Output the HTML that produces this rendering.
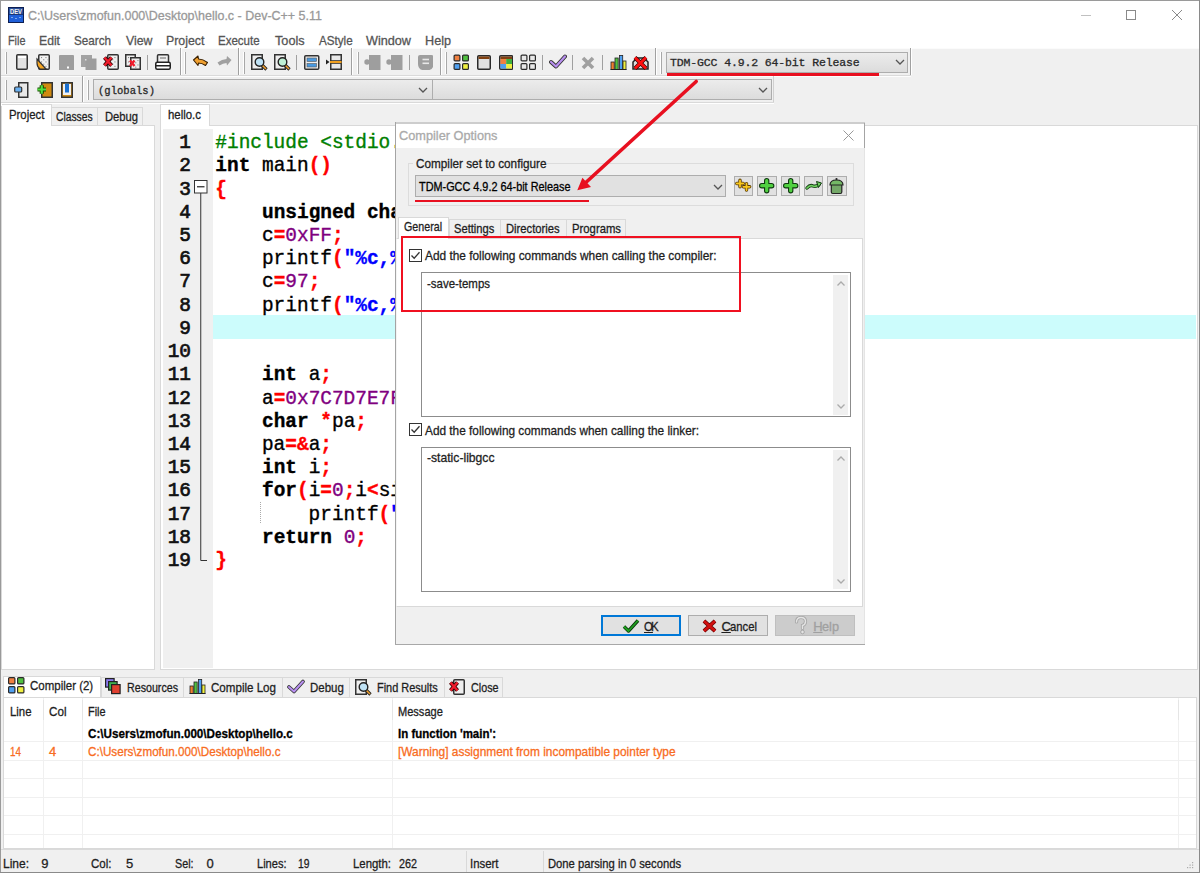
<!DOCTYPE html><html><head><meta charset="utf-8"><style>
html,body{margin:0;padding:0;width:1200px;height:873px;overflow:hidden;background:#f0f0f0;}
body>div,body>svg{position:absolute;white-space:nowrap;}
body>div>div{white-space:pre;}
b{font-weight:bold}
</style></head><body>
<div style="left:0px;top:0px;width:1200px;height:873px;background:#f0f0f0;"></div>
<div style="left:0px;top:0px;width:1200px;height:1px;background:#9a9a9a;"></div>
<div style="left:0px;top:0px;width:1px;height:873px;background:#9a9a9a;"></div>
<div style="left:1199px;top:0px;width:1px;height:873px;background:#8a8a8a;"></div>
<div style="left:0px;top:872px;width:1200px;height:1px;background:#8a8a8a;"></div>
<div style="left:1px;top:1px;width:1198px;height:29px;background:#fff;"></div>
<svg style="left:8px;top:7px" width="16" height="16" viewBox="0 0 16 16"><rect x="0" y="0" width="16" height="16" fill="#0d1f52"/><rect x="1" y="1" width="14" height="6.5" fill="#2a4f9a"/><text x="8" y="6.8" font-family="Liberation Sans" font-weight="bold" font-size="6.5" text-anchor="middle" fill="#f4f4f4" textLength="12" lengthAdjust="spacingAndGlyphs">DEV</text><rect x="1" y="8" width="14" height="7" fill="#1f5fd8"/><rect x="3" y="10" width="2" height="1" fill="#7aa8f0"/><rect x="7" y="11" width="2" height="1" fill="#7aa8f0"/><rect x="11" y="10" width="2" height="1" fill="#7aa8f0"/></svg>
<div style="left:27.5px;top:9.40px;font:normal 13px/13px 'Liberation Sans', sans-serif;color:#999;-webkit-text-stroke:0.3px #999;transform:scaleX(0.9604);transform-origin:0 0;">C:\Users\zmofun.000\Desktop\hello.c - Dev-C++ 5.11</div>
<div style="left:1081px;top:14.5px;width:10px;height:1.5px;background:#c0c0c0;"></div>
<div style="left:1126px;top:10px;width:10px;height:10px;border:1px solid #8a8a8a;box-sizing:border-box;"></div>
<svg style="left:1171px;top:9px" width="12" height="12"><path d="M1 1L11 11M11 1L1 11" stroke="#8a8a8a" stroke-width="1"/></svg>
<div style="left:1px;top:30px;width:1198px;height:18px;background:#fff;"></div>
<div style="left:7.6px;top:33.90px;font:normal 13px/13px 'Liberation Sans', sans-serif;color:#555;-webkit-text-stroke:0.3px #555;transform:scaleX(0.8306);transform-origin:0 0;">File</div>
<div style="left:39.4px;top:33.90px;font:normal 13px/13px 'Liberation Sans', sans-serif;color:#555;-webkit-text-stroke:0.3px #555;transform:scaleX(0.9374);transform-origin:0 0;">Edit</div>
<div style="left:74.4px;top:33.90px;font:normal 13px/13px 'Liberation Sans', sans-serif;color:#555;-webkit-text-stroke:0.3px #555;transform:scaleX(0.8982);transform-origin:0 0;">Search</div>
<div style="left:125.6px;top:33.90px;font:normal 13px/13px 'Liberation Sans', sans-serif;color:#555;-webkit-text-stroke:0.3px #555;transform:scaleX(0.9447);transform-origin:0 0;">View</div>
<div style="left:165.6px;top:33.90px;font:normal 13px/13px 'Liberation Sans', sans-serif;color:#555;-webkit-text-stroke:0.3px #555;transform:scaleX(0.9491);transform-origin:0 0;">Project</div>
<div style="left:218px;top:33.90px;font:normal 13px/13px 'Liberation Sans', sans-serif;color:#555;-webkit-text-stroke:0.3px #555;transform:scaleX(0.8856);transform-origin:0 0;">Execute</div>
<div style="left:274.8px;top:33.90px;font:normal 13px/13px 'Liberation Sans', sans-serif;color:#555;-webkit-text-stroke:0.3px #555;transform:scaleX(0.9753);transform-origin:0 0;">Tools</div>
<div style="left:318.7px;top:33.90px;font:normal 13px/13px 'Liberation Sans', sans-serif;color:#555;-webkit-text-stroke:0.3px #555;transform:scaleX(0.8943);transform-origin:0 0;">AStyle</div>
<div style="left:366px;top:33.90px;font:normal 13px/13px 'Liberation Sans', sans-serif;color:#555;-webkit-text-stroke:0.3px #555;transform:scaleX(0.9732);transform-origin:0 0;">Window</div>
<div style="left:425px;top:33.90px;font:normal 13px/13px 'Liberation Sans', sans-serif;color:#555;-webkit-text-stroke:0.3px #555;transform:scaleX(0.9724);transform-origin:0 0;">Help</div>
<div style="left:1px;top:48px;width:1198px;height:55px;background:#f0f0f0;"></div>
<div style="left:1px;top:47.5px;width:1198px;height:1px;background:#fbfbfb;"></div>
<div style="left:1px;top:75px;width:910px;height:1px;background:#dadada;"></div>
<div style="left:1px;top:76px;width:910px;height:1px;background:#fdfdfd;"></div>
<div style="left:1px;top:102px;width:773px;height:1px;background:#d9d9d9;"></div>
<div style="left:1px;top:103px;width:773px;height:1px;background:#fff;"></div>
<div style="left:5px;top:52px;width:1px;height:22px;background:#fff;"></div>
<div style="left:6px;top:52px;width:1px;height:22px;background:#a8a8a8;"></div>
<div style="left:184px;top:52px;width:1px;height:22px;background:#fff;"></div>
<div style="left:185px;top:52px;width:1px;height:22px;background:#a8a8a8;"></div>
<div style="left:243px;top:52px;width:1px;height:22px;background:#fff;"></div>
<div style="left:244px;top:52px;width:1px;height:22px;background:#a8a8a8;"></div>
<div style="left:357px;top:52px;width:1px;height:22px;background:#fff;"></div>
<div style="left:358px;top:52px;width:1px;height:22px;background:#a8a8a8;"></div>
<div style="left:445px;top:52px;width:1px;height:22px;background:#fff;"></div>
<div style="left:446px;top:52px;width:1px;height:22px;background:#a8a8a8;"></div>
<div style="left:660px;top:52px;width:1px;height:22px;background:#fff;"></div>
<div style="left:661px;top:52px;width:1px;height:22px;background:#a8a8a8;"></div>
<div style="left:179.5px;top:48px;width:1px;height:27px;background:#a0a0a0;"></div>
<div style="left:180.5px;top:48px;width:1px;height:27px;background:#fff;"></div>
<div style="left:237.5px;top:48px;width:1px;height:27px;background:#a0a0a0;"></div>
<div style="left:238.5px;top:48px;width:1px;height:27px;background:#fff;"></div>
<div style="left:350.5px;top:48px;width:1px;height:27px;background:#a0a0a0;"></div>
<div style="left:351.5px;top:48px;width:1px;height:27px;background:#fff;"></div>
<div style="left:440px;top:48px;width:1px;height:27px;background:#a0a0a0;"></div>
<div style="left:441px;top:48px;width:1px;height:27px;background:#fff;"></div>
<div style="left:654.5px;top:48px;width:1px;height:27px;background:#a0a0a0;"></div>
<div style="left:655.5px;top:48px;width:1px;height:27px;background:#fff;"></div>
<div style="left:147px;top:55px;width:1px;height:15px;background:#a0a0a0;"></div>
<div style="left:296px;top:55px;width:1px;height:15px;background:#a0a0a0;"></div>
<div style="left:409px;top:55px;width:1px;height:15px;background:#a0a0a0;"></div>
<div style="left:542px;top:55px;width:1px;height:15px;background:#a0a0a0;"></div>
<div style="left:572px;top:55px;width:1px;height:15px;background:#a0a0a0;"></div>
<div style="left:602px;top:55px;width:1px;height:15px;background:#a0a0a0;"></div>
<div style="left:5px;top:80px;width:1px;height:20px;background:#fff;"></div>
<div style="left:6px;top:80px;width:1px;height:20px;background:#a8a8a8;"></div>
<div style="left:87px;top:80px;width:1px;height:20px;background:#fff;"></div>
<div style="left:88px;top:80px;width:1px;height:20px;background:#a8a8a8;"></div>
<div style="left:81.5px;top:76px;width:1px;height:26px;background:#a0a0a0;"></div>
<div style="left:82.5px;top:76px;width:1px;height:26px;background:#fff;"></div>
<div style="left:773px;top:76px;width:1px;height:26px;background:#d0d0d0;"></div>
<div style="left:910px;top:48px;width:1px;height:27px;background:#a0a0a0;"></div>
<div style="left:911px;top:48px;width:1px;height:27px;background:#fff;"></div>
<svg style="left:16px;top:54px" width="12" height="16" viewBox="0 0 12 16"><rect x="0.75" y="0.75" width="10.5" height="14.5" rx="1" fill="#e2e2e2" stroke="#333" stroke-width="1.5"/><rect x="2" y="2" width="8" height="2" fill="#fff"/></svg>
<svg style="left:36px;top:54px" width="14" height="16" viewBox="0 0 14 16"><rect x="2.75" y="0.75" width="10.5" height="14.5" rx="1" fill="#f2f2f2" stroke="#333" stroke-width="1.5"/><rect x="5.00" y="3.00" width="1.1" height="1.1" fill="#8a8a8a"/><rect x="5.00" y="7.40" width="1.1" height="1.1" fill="#8a8a8a"/><rect x="5.00" y="11.80" width="1.1" height="1.1" fill="#8a8a8a"/><rect x="7.20" y="5.20" width="1.1" height="1.1" fill="#8a8a8a"/><rect x="7.20" y="9.60" width="1.1" height="1.1" fill="#8a8a8a"/><rect x="9.40" y="3.00" width="1.1" height="1.1" fill="#8a8a8a"/><rect x="9.40" y="7.40" width="1.1" height="1.1" fill="#8a8a8a"/><rect x="9.40" y="11.80" width="1.1" height="1.1" fill="#8a8a8a"/><rect x="11.60" y="5.20" width="1.1" height="1.1" fill="#8a8a8a"/><rect x="11.60" y="9.60" width="1.1" height="1.1" fill="#8a8a8a"/><path d="M1 5 L10 15 L4 15 Q1 13 1 9Z" fill="#f5a623" stroke="#333" stroke-width="1.2"/></svg>
<svg style="left:59px;top:54.5px" width="15" height="15.5" viewBox="0 0 15 15.5"><rect x="0" y="0" width="15" height="15.5" rx="1" fill="#9d9d9d"/><rect x="8" y="11.5" width="2" height="2" fill="#fff"/></svg>
<svg style="left:81px;top:55px" width="16" height="15" viewBox="0 0 16 15"><rect x="0" y="0" width="11" height="12" fill="#a2a2a2"/><rect x="4.5" y="3.5" width="11" height="11.5" fill="#9d9d9d"/><rect x="4" y="4" width="1.5" height="1.5" fill="#ddd"/></svg>
<svg style="left:103px;top:54px" width="16" height="16" viewBox="0 0 16 16"><rect x="4.75" y="0.75" width="10.5" height="14.5" rx="1" fill="#eee" stroke="#333" stroke-width="1.5"/><rect x="7.00" y="3.00" width="1.1" height="1.1" fill="#8a8a8a"/><rect x="7.00" y="7.40" width="1.1" height="1.1" fill="#8a8a8a"/><rect x="7.00" y="11.80" width="1.1" height="1.1" fill="#8a8a8a"/><rect x="9.20" y="5.20" width="1.1" height="1.1" fill="#8a8a8a"/><rect x="9.20" y="9.60" width="1.1" height="1.1" fill="#8a8a8a"/><rect x="11.40" y="3.00" width="1.1" height="1.1" fill="#8a8a8a"/><rect x="11.40" y="7.40" width="1.1" height="1.1" fill="#8a8a8a"/><rect x="11.40" y="11.80" width="1.1" height="1.1" fill="#8a8a8a"/><path d="M1.5 3.5L8.5 11.5M8.5 3.5L1.5 11.5" stroke="#300" stroke-width="4"/><path d="M1.5 3.5L8.5 11.5M8.5 3.5L1.5 11.5" stroke="#f01c2c" stroke-width="2.4"/></svg>
<svg style="left:125px;top:54px" width="16" height="16" viewBox="0 0 16 16"><rect x="0.75" y="0.75" width="9.5" height="11.5" fill="#eee" stroke="#333" stroke-width="1.5"/><rect x="3.00" y="3.00" width="1.1" height="1.1" fill="#8a8a8a"/><rect x="3.00" y="7.40" width="1.1" height="1.1" fill="#8a8a8a"/><rect x="5.20" y="5.20" width="1.1" height="1.1" fill="#8a8a8a"/><rect x="5.20" y="9.60" width="1.1" height="1.1" fill="#8a8a8a"/><rect x="7.40" y="3.00" width="1.1" height="1.1" fill="#8a8a8a"/><rect x="7.40" y="7.40" width="1.1" height="1.1" fill="#8a8a8a"/><rect x="5.75" y="3.75" width="9.5" height="11.5" fill="#eee" stroke="#333" stroke-width="1.5"/><rect x="8.00" y="6.00" width="1.1" height="1.1" fill="#8a8a8a"/><rect x="8.00" y="10.40" width="1.1" height="1.1" fill="#8a8a8a"/><rect x="10.20" y="8.20" width="1.1" height="1.1" fill="#8a8a8a"/><rect x="10.20" y="12.60" width="1.1" height="1.1" fill="#8a8a8a"/><rect x="12.40" y="6.00" width="1.1" height="1.1" fill="#8a8a8a"/><rect x="12.40" y="10.40" width="1.1" height="1.1" fill="#8a8a8a"/><path d="M5 6.5L9.5 12M9.5 6.5L5 12" stroke="#f01c2c" stroke-width="2.4"/></svg>
<svg style="left:155px;top:54px" width="16" height="16" viewBox="0 0 16 16"><rect x="2.5" y="0.75" width="11" height="9" rx="1" fill="#eee" stroke="#333" stroke-width="1.5"/><rect x="5" y="3" width="6" height="2" fill="#aaa"/><rect x="0.75" y="8.25" width="14.5" height="7" rx="1.5" fill="#fff" stroke="#222" stroke-width="1.5"/><rect x="1" y="11" width="14" height="1.5" fill="#222"/></svg>
<svg style="left:192px;top:55px" width="18" height="12" viewBox="0 0 18 12"><path d="M1.5 5 L6 1 L6.5 4 Q11 4 15.5 7.5 L13.5 10.5 Q10 8 6.5 8 L6 10.5 Z" fill="#f0a030" stroke="#3a2000" stroke-width="1.1" stroke-linejoin="round"/></svg>
<svg style="left:215px;top:55px" width="18" height="12" viewBox="0 0 18 12"><path d="M16.5 5 L12 1 L11.5 4 Q7 4 2.5 7.5 L4.5 10.5 Q8 8 11.5 8 L12 10.5 Z" fill="#a0a0a0"/></svg>
<svg style="left:251px;top:54px" width="17" height="17" viewBox="0 0 17 17"><rect x="0.75" y="0.75" width="10.5" height="14.5" fill="#eee" stroke="#333" stroke-width="1.5"/><path d="M11 11 L15.5 15.5" stroke="#222" stroke-width="3.2"/><path d="M11.3 11.3 L15 15" stroke="#f0a030" stroke-width="1.6"/><circle cx="8.5" cy="8" r="4.3" fill="#bfe2f5" stroke="#222" stroke-width="1.4"/></svg>
<svg style="left:274px;top:54px" width="17" height="17" viewBox="0 0 17 17"><rect x="0.75" y="0.75" width="10.5" height="14.5" fill="#eee" stroke="#333" stroke-width="1.5"/><path d="M11 11 L15.5 15.5" stroke="#222" stroke-width="3.2"/><path d="M11.3 11.3 L15 15" stroke="#f0a030" stroke-width="1.6"/><circle cx="8.5" cy="8" r="4.3" fill="#bff0d5" stroke="#222" stroke-width="1.4"/></svg>
<svg style="left:304px;top:54.5px" width="16" height="15" viewBox="0 0 16 15"><rect x="0.75" y="0.75" width="14" height="13.5" rx="1" fill="#eee" stroke="#333" stroke-width="1.5"/><rect x="3" y="3" width="9.5" height="3.5" fill="#4a9ae0" stroke="#555" stroke-width="0.6"/><rect x="3" y="8.5" width="9.5" height="3.5" fill="#4a9ae0" stroke="#555" stroke-width="0.6"/></svg>
<svg style="left:326px;top:54px" width="16" height="16" viewBox="0 0 16 16"><rect x="4.75" y="0.75" width="10.5" height="14.5" fill="#e8e8e8" stroke="#333" stroke-width="1.5"/><rect x="4" y="7" width="11.5" height="2.2" fill="#f0a020"/><rect x="4" y="6" width="11.5" height="0.8" fill="#333"/><rect x="4" y="9.2" width="11.5" height="0.8" fill="#333"/><path d="M0 5.5 L3.5 8 L0 10.5Z" fill="#222"/></svg>
<svg style="left:364px;top:54.5px" width="17" height="15.5" viewBox="0 0 17 15.5"><rect x="5" y="0" width="11.5" height="15" fill="#9e9e9e"/><circle cx="3" cy="7" r="2.7" fill="#9e9e9e"/></svg>
<svg style="left:386px;top:54.5px" width="17" height="15.5" viewBox="0 0 17 15.5"><rect x="5" y="0" width="11.5" height="15" fill="#9e9e9e"/><circle cx="3" cy="7" r="2.7" fill="#9e9e9e"/></svg>
<svg style="left:417.5px;top:54.5px" width="15.5" height="15.5" viewBox="0 0 15.5 15.5"><path d="M0 2 Q0 0 2 0 L13.5 0 Q15.5 0 15.5 2 L15.5 9 Q15.5 15.5 7.75 15.5 Q0 15.5 0 9Z" fill="#9e9e9e"/><rect x="4.5" y="3.7" width="6.5" height="1.6" fill="#e8e8e8"/><rect x="4.5" y="7.5" width="6.5" height="1.6" fill="#e8e8e8"/></svg>
<svg style="left:453px;top:54px" width="17" height="16" viewBox="0 0 17 16"><rect x="1.1" y="1.1" width="5.8" height="5.8" rx="1" fill="#f08040" stroke="#2a2a2a" stroke-width="1.2"/><rect x="9.6" y="1.1" width="5.8" height="5.8" rx="1" fill="#50c040" stroke="#2a2a2a" stroke-width="1.2"/><rect x="1.1" y="9.6" width="5.8" height="5.8" rx="1" fill="#50a0f0" stroke="#2a2a2a" stroke-width="1.2"/><rect x="9.6" y="9.6" width="5.8" height="5.8" rx="1" fill="#f0f040" stroke="#2a2a2a" stroke-width="1.2"/></svg>
<svg style="left:476.5px;top:54.5px" width="14" height="15" viewBox="0 0 14 15"><rect x="0.75" y="0.75" width="12.5" height="13.5" rx="1" fill="#e0e0e0" stroke="#2a2a2a" stroke-width="1.5"/><rect x="1.5" y="1.5" width="11" height="2.5" fill="#804010"/></svg>
<svg style="left:498.5px;top:54.5px" width="14.5" height="15" viewBox="0 0 14.5 15"><rect x="0.75" y="0.75" width="13" height="13.5" rx="1" fill="#e0e0e0" stroke="#2a2a2a" stroke-width="1.5"/><rect x="1.5" y="1.5" width="11.5" height="2.5" fill="#804010"/><rect x="1.5" y="4" width="5.7" height="5" fill="#f08040"/><rect x="7.2" y="4" width="5.8" height="5" fill="#40b040"/><rect x="1.5" y="9" width="5.7" height="4.5" fill="#50a0f0"/><rect x="7.2" y="9" width="5.8" height="4.5" fill="#f0f040"/></svg>
<svg style="left:519.5px;top:54px" width="17" height="16" viewBox="0 0 17 16"><rect x="1.1" y="1.1" width="5.8" height="5.8" rx="1" fill="#e8e8e8" stroke="#2a2a2a" stroke-width="1.2"/><rect x="9.6" y="1.1" width="5.8" height="5.8" rx="1" fill="#e8e8e8" stroke="#2a2a2a" stroke-width="1.2"/><rect x="1.1" y="9.6" width="5.8" height="5.8" rx="1" fill="#e8e8e8" stroke="#2a2a2a" stroke-width="1.2"/><rect x="9.6" y="9.6" width="5.8" height="5.8" rx="1" fill="#e8e8e8" stroke="#2a2a2a" stroke-width="1.2"/></svg>
<svg style="left:549px;top:54px" width="18" height="15" viewBox="0 0 18 15"><path d="M2 8 L7 12.5 L16 2.5" fill="none" stroke="#333" stroke-width="4" stroke-linejoin="round" stroke-linecap="round"/><path d="M2 8 L7 12.5 L16 2.5" fill="none" stroke="#b890f0" stroke-width="2.2" stroke-linejoin="round" stroke-linecap="round"/></svg>
<svg style="left:581px;top:55.5px" width="14" height="14" viewBox="0 0 14 14"><path d="M2 2L12 12M12 2L2 12" stroke="#a0a0a0" stroke-width="3.6"/></svg>
<svg style="left:610px;top:54.5px" width="17" height="15" viewBox="0 0 17 15"><rect x="1" y="7" width="3.2" height="7.5" fill="#f08030" stroke="#222" stroke-width="0.8"/><rect x="5" y="3" width="3.2" height="11.5" fill="#50c040" stroke="#222" stroke-width="0.8"/><rect x="9.5" y="0.5" width="3.2" height="14" fill="#50a0f0" stroke="#222" stroke-width="0.8"/><rect x="13" y="6" width="3" height="8.5" fill="#f0f040" stroke="#222" stroke-width="0.8"/><rect x="0.5" y="14" width="16" height="1" fill="#222"/></svg>
<svg style="left:632px;top:54.5px" width="17" height="15" viewBox="0 0 17 15"><path d="M1 14 L1 7 L5 3 L12 3 L16 7 L16 14Z" fill="#ddd" stroke="#222" stroke-width="1.5"/><path d="M3 2.5L14 13.5M14 2.5L3 13.5" stroke="#300" stroke-width="4"/><path d="M3 2.5L14 13.5M14 2.5L3 13.5" stroke="#ff1010" stroke-width="2.8"/></svg>
<div style="left:666px;top:51.5px;width:242px;height:21.5px;background:linear-gradient(#ececec,#dcdcdc);border:1px solid #adadad;box-sizing:border-box;"></div>
<div style="left:670px;top:57.19px;font:normal 11.5px/11.5px 'Liberation Mono', monospace;color:#222;letter-spacing:-0.133px;-webkit-text-stroke:0.3px #333;">TDM-GCC 4.9.2 64-bit Release</div>
<svg style="left:894px;top:58px" width="12" height="8" viewBox="0 0 12 8"><path d="M2 2 L6 6 L10 2" fill="none" stroke="#555" stroke-width="1.3"/></svg>
<svg style="left:14px;top:82px" width="15" height="16" viewBox="0 0 15 16"><rect x="4.75" y="0.75" width="9" height="14.5" fill="#e8e8e8" stroke="#333" stroke-width="1.5"/><rect x="0.7" y="5" width="7" height="5" rx="1" fill="#6ab0f0" stroke="#333" stroke-width="1.2"/></svg>
<svg style="left:36px;top:82px" width="17" height="16" viewBox="0 0 17 16"><rect x="5.75" y="0.75" width="10.5" height="14.5" fill="#d08a10" stroke="#333" stroke-width="1.5"/><path d="M1.5 7.5 H10 M5.75 3.25 V11.75" stroke="#1a4a00" stroke-width="4.2"/><path d="M1.5 7.5 H10 M5.75 3.25 V11.75" stroke="#50e040" stroke-width="2.2"/></svg>
<svg style="left:61px;top:82px" width="12" height="16" viewBox="0 0 12 16"><rect x="0.75" y="0.75" width="10.5" height="14.5" fill="#d08a10" stroke="#333" stroke-width="1.5"/><rect x="2" y="2" width="8" height="11" fill="#f0f0f0"/><rect x="4" y="1.5" width="4" height="9" fill="#1a70d0"/></svg>
<div style="left:92.5px;top:78.5px;width:340px;height:21px;background:linear-gradient(#ececec,#dcdcdc);border:1px solid #adadad;box-sizing:border-box;"></div>
<div style="left:98px;top:85.85px;font:normal 10.5px/10.5px 'Liberation Mono', monospace;color:#222;letter-spacing:0.033px;-webkit-text-stroke:0.3px #333;">(globals)</div>
<svg style="left:417px;top:85.5px" width="12" height="8" viewBox="0 0 12 8"><path d="M2 2 L6 6 L10 2" fill="none" stroke="#555" stroke-width="1.3"/></svg>
<div style="left:432px;top:78.5px;width:340px;height:21px;background:linear-gradient(#ececec,#dcdcdc);border:1px solid #adadad;box-sizing:border-box;"></div>
<svg style="left:756.5px;top:85.5px" width="12" height="8" viewBox="0 0 12 8"><path d="M2 2 L6 6 L10 2" fill="none" stroke="#555" stroke-width="1.3"/></svg>
<div style="left:1px;top:104px;width:1198px;height:21px;background:#f0f0f0;"></div>
<div style="left:51px;top:106.5px;width:46.5px;height:19px;background:#f0f0f0;border:1px solid #d9d9d9;border-bottom:none;box-sizing:border-box;"></div>
<div style="left:97px;top:106.5px;width:46px;height:19px;background:#f0f0f0;border:1px solid #d9d9d9;border-bottom:none;box-sizing:border-box;"></div>
<div style="left:1px;top:104px;width:50.5px;height:22px;background:#fff;border:1px solid #d9d9d9;border-bottom:none;box-sizing:border-box;"></div>
<div style="left:1px;top:125px;width:154px;height:545px;background:#fff;border:1px solid #d9d9d9;border-top:none;box-sizing:border-box;"></div>
<div style="left:51px;top:125px;width:103px;height:1px;background:#d9d9d9;"></div>
<div style="left:1px;top:104px;width:1px;height:2px;background:#fff;"></div>
<div style="left:8.6px;top:108.40px;font:normal 13px/13px 'Liberation Sans', sans-serif;color:#1e1e1e;-webkit-text-stroke:0.3px #1e1e1e;transform:scaleX(0.8749);transform-origin:0 0;">Project</div>
<div style="left:56px;top:109.90px;font:normal 13px/13px 'Liberation Sans', sans-serif;color:#1e1e1e;-webkit-text-stroke:0.3px #1e1e1e;transform:scaleX(0.7916);transform-origin:0 0;">Classes</div>
<div style="left:104.6px;top:109.90px;font:normal 13px/13px 'Liberation Sans', sans-serif;color:#1e1e1e;-webkit-text-stroke:0.3px #1e1e1e;transform:scaleX(0.8614);transform-origin:0 0;">Debug</div>
<div style="left:159.5px;top:125px;width:1038px;height:545px;background:#fff;border:1px solid #d9d9d9;box-sizing:border-box;"></div>
<div style="left:159.5px;top:104px;width:50px;height:22px;background:#fff;border:1px solid #d9d9d9;border-bottom:none;box-sizing:border-box;"></div>
<div style="left:209.5px;top:125px;width:987px;height:1px;background:#d9d9d9;"></div>
<div style="left:168px;top:108.40px;font:normal 13px/13px 'Liberation Sans', sans-serif;color:#1e1e1e;-webkit-text-stroke:0.3px #1e1e1e;transform:scaleX(0.8781);transform-origin:0 0;">hello.c</div>
<div style="left:163px;top:129.2px;width:49.5px;height:539px;background:#f0f0f0;"></div>
<div style="left:213px;top:315px;width:983px;height:23.5px;background:#ccfcfc;"></div>
<div style="left:163px;top:132.1px;width:28px;font:normal 19.45px/23.23px &quot;Liberation Mono&quot;, monospace;color:#111;-webkit-text-stroke:0.7px #111"><div style="height:23.23px;text-align:right">1</div><div style="height:23.23px;text-align:right">2</div><div style="height:23.23px;text-align:right">3</div><div style="height:23.23px;text-align:right">4</div><div style="height:23.23px;text-align:right">5</div><div style="height:23.23px;text-align:right">6</div><div style="height:23.23px;text-align:right">7</div><div style="height:23.23px;text-align:right">8</div><div style="height:23.23px;text-align:right">9</div><div style="height:23.23px;text-align:right">10</div><div style="height:23.23px;text-align:right">11</div><div style="height:23.23px;text-align:right">12</div><div style="height:23.23px;text-align:right">13</div><div style="height:23.23px;text-align:right">14</div><div style="height:23.23px;text-align:right">15</div><div style="height:23.23px;text-align:right">16</div><div style="height:23.23px;text-align:right">17</div><div style="height:23.23px;text-align:right">18</div><div style="height:23.23px;text-align:right">19</div></div>
<svg style="left:194px;top:180px" width="14" height="386" viewBox="0 0 14 386"><rect x="0.5" y="0.5" width="12.5" height="12.5" fill="#fff" stroke="#333" stroke-width="1"/><path d="M3 6.75H10.5" stroke="#333" stroke-width="1.3"/><path d="M6.75 13V380.5H13" fill="none" stroke="#333" stroke-width="1"/></svg>
<div style="left:259.5px;top:502px;width:1px;height:21px;border-left:1px dotted #aaa;"></div>
<div style="left:215.3px;top:132.1px;font:normal 19.45px/23.23px &quot;Liberation Mono&quot;, monospace;color:#000;white-space:pre;-webkit-text-stroke:0.35px"><div style="height:23.23px"><span style="color:#008000">#include &lt;stdio.h&gt;</span></div><div style="height:23.23px"><b>int</b> main<span style="color:#ff0000;font-weight:bold">()</span></div><div style="height:23.23px"><span style="color:#ff0000;font-weight:bold">{</span></div><div style="height:23.23px">    <b>unsigned char</b> c<span style="color:#ff0000;font-weight:bold">;</span></div><div style="height:23.23px">    c<span style="color:#ff0000;font-weight:bold">=</span><span style="color:#800080">0xFF</span><span style="color:#ff0000;font-weight:bold">;</span></div><div style="height:23.23px">    printf<span style="color:#ff0000;font-weight:bold">(</span><span style="color:#0000ff;font-weight:bold">"%c,%d\n"</span><span style="color:#ff0000;font-weight:bold">,</span>c<span style="color:#ff0000;font-weight:bold">,</span>c<span style="color:#ff0000;font-weight:bold">);</span></div><div style="height:23.23px">    c<span style="color:#ff0000;font-weight:bold">=</span><span style="color:#800080">97</span><span style="color:#ff0000;font-weight:bold">;</span></div><div style="height:23.23px">    printf<span style="color:#ff0000;font-weight:bold">(</span><span style="color:#0000ff;font-weight:bold">"%c,%d\n"</span><span style="color:#ff0000;font-weight:bold">,</span>c<span style="color:#ff0000;font-weight:bold">,</span>c<span style="color:#ff0000;font-weight:bold">);</span></div><div style="height:23.23px"></div><div style="height:23.23px"></div><div style="height:23.23px">    <b>int</b> a<span style="color:#ff0000;font-weight:bold">;</span></div><div style="height:23.23px">    a<span style="color:#ff0000;font-weight:bold">=</span><span style="color:#800080">0x7C7D7E7F</span><span style="color:#ff0000;font-weight:bold">;</span></div><div style="height:23.23px">    <b>char</b> <span style="color:#ff0000;font-weight:bold">*</span>pa<span style="color:#ff0000;font-weight:bold">;</span></div><div style="height:23.23px">    pa<span style="color:#ff0000;font-weight:bold">=&amp;</span>a<span style="color:#ff0000;font-weight:bold">;</span></div><div style="height:23.23px">    <b>int</b> i<span style="color:#ff0000;font-weight:bold">;</span></div><div style="height:23.23px">    <b>for</b><span style="color:#ff0000;font-weight:bold">(</span>i<span style="color:#ff0000;font-weight:bold">=</span><span style="color:#800080">0</span><span style="color:#ff0000;font-weight:bold">;</span>i<span style="color:#ff0000;font-weight:bold">&lt;</span>sizeof<span style="color:#ff0000;font-weight:bold">(</span>a<span style="color:#ff0000;font-weight:bold">);</span></div><div style="height:23.23px">        printf<span style="color:#ff0000;font-weight:bold">(</span><span style="color:#0000ff;font-weight:bold">"%x\n"</span><span style="color:#ff0000;font-weight:bold">,</span><span style="color:#ff0000;font-weight:bold">*(</span>pa<span style="color:#ff0000;font-weight:bold">+</span>i<span style="color:#ff0000;font-weight:bold">));</span></div><div style="height:23.23px">    <b>return</b> <span style="color:#800080">0</span><span style="color:#ff0000;font-weight:bold">;</span></div><div style="height:23.23px"><span style="color:#ff0000;font-weight:bold">}</span></div></div>
<div style="left:1px;top:670px;width:1198px;height:7px;background:#f0f0f0;"></div>
<div style="left:100.8px;top:677px;width:83.60000000000001px;height:21px;background:#f0f0f0;border:1px solid #d9d9d9;border-bottom:none;box-sizing:border-box;"></div>
<div style="left:183.4px;top:677px;width:99.6px;height:21px;background:#f0f0f0;border:1px solid #d9d9d9;border-bottom:none;box-sizing:border-box;"></div>
<div style="left:282px;top:677px;width:68px;height:21px;background:#f0f0f0;border:1px solid #d9d9d9;border-bottom:none;box-sizing:border-box;"></div>
<div style="left:349px;top:677px;width:95.5px;height:21px;background:#f0f0f0;border:1px solid #d9d9d9;border-bottom:none;box-sizing:border-box;"></div>
<div style="left:443.5px;top:677px;width:59.89999999999998px;height:21px;background:#f0f0f0;border:1px solid #d9d9d9;border-bottom:none;box-sizing:border-box;"></div>
<div style="left:3px;top:675.5px;width:98px;height:22.5px;background:#fff;border:1px solid #d9d9d9;border-bottom:none;box-sizing:border-box;"></div>
<div style="left:3px;top:697px;width:1194px;height:152px;background:#fff;border:1px solid #d9d9d9;box-sizing:border-box;"></div>
<div style="left:101px;top:697px;width:1096px;height:1px;background:#d9d9d9;"></div>
<div style="left:30px;top:679.20px;font:normal 13px/13px 'Liberation Sans', sans-serif;color:#1e1e1e;-webkit-text-stroke:0.3px #1e1e1e;transform:scaleX(0.8837);transform-origin:0 0;">Compiler (2)</div>
<div style="left:126.8px;top:681.10px;font:normal 13px/13px 'Liberation Sans', sans-serif;color:#1e1e1e;-webkit-text-stroke:0.3px #1e1e1e;transform:scaleX(0.8207);transform-origin:0 0;">Resources</div>
<div style="left:211.3px;top:681.10px;font:normal 13px/13px 'Liberation Sans', sans-serif;color:#1e1e1e;-webkit-text-stroke:0.3px #1e1e1e;transform:scaleX(0.8906);transform-origin:0 0;">Compile Log</div>
<div style="left:309.7px;top:681.10px;font:normal 13px/13px 'Liberation Sans', sans-serif;color:#1e1e1e;-webkit-text-stroke:0.3px #1e1e1e;transform:scaleX(0.8823);transform-origin:0 0;">Debug</div>
<div style="left:377px;top:681.10px;font:normal 13px/13px 'Liberation Sans', sans-serif;color:#1e1e1e;-webkit-text-stroke:0.3px #1e1e1e;transform:scaleX(0.8415);transform-origin:0 0;">Find Results</div>
<div style="left:471.2px;top:681.10px;font:normal 13px/13px 'Liberation Sans', sans-serif;color:#1e1e1e;-webkit-text-stroke:0.3px #1e1e1e;transform:scaleX(0.8274);transform-origin:0 0;">Close</div>
<svg style="left:8px;top:677px" width="17" height="17" viewBox="0 0 17 17"><rect x="0.6" y="0.6" width="6.3" height="6.3" rx="1" fill="#f08040" stroke="#2a2a2a" stroke-width="1.2"/><rect x="9.6" y="0.6" width="6.3" height="6.3" rx="1" fill="#50c040" stroke="#2a2a2a" stroke-width="1.2"/><rect x="0.6" y="9.6" width="6.3" height="6.3" rx="1" fill="#50a0f0" stroke="#2a2a2a" stroke-width="1.2"/><rect x="9.6" y="9.6" width="6.3" height="6.3" rx="1" fill="#f0f040" stroke="#2a2a2a" stroke-width="1.2"/></svg>
<svg style="left:105px;top:678px" width="16" height="17" viewBox="0 0 16 17"><rect x="0.6" y="0.6" width="8.5" height="8.5" fill="#8a7af0" stroke="#222" stroke-width="1.2"/><rect x="3.6" y="3.6" width="8.5" height="8.5" fill="#40b050" stroke="#222" stroke-width="1.2"/><rect x="6.6" y="6.6" width="8.5" height="9" fill="#e04030" stroke="#222" stroke-width="1.2"/></svg>
<svg style="left:189px;top:679px" width="17" height="16" viewBox="0 0 17 16"><rect x="1" y="7" width="3.2" height="7.5" fill="#f08030" stroke="#222" stroke-width="0.8"/><rect x="5" y="3" width="3.2" height="11.5" fill="#50c040" stroke="#222" stroke-width="0.8"/><rect x="9.5" y="0.5" width="3.2" height="14" fill="#50a0f0" stroke="#222" stroke-width="0.8"/><rect x="13" y="6" width="3" height="8.5" fill="#f0f040" stroke="#222" stroke-width="0.8"/><rect x="0.5" y="14" width="16" height="1" fill="#222"/></svg>
<svg style="left:287px;top:679px" width="18" height="15" viewBox="0 0 18 15"><path d="M2 8 L7 12.5 L16 2.5" fill="none" stroke="#333" stroke-width="3.6" stroke-linejoin="round" stroke-linecap="round"/><path d="M2 8 L7 12.5 L16 2.5" fill="none" stroke="#b890f0" stroke-width="2" stroke-linejoin="round" stroke-linecap="round"/></svg>
<svg style="left:354.5px;top:679px" width="17" height="17" viewBox="0 0 17 17"><rect x="0.75" y="0.75" width="10.5" height="14.5" fill="#eee" stroke="#333" stroke-width="1.5"/><path d="M11 11 L15.5 15.5" stroke="#222" stroke-width="3.2"/><path d="M11.3 11.3 L15 15" stroke="#f0a030" stroke-width="1.6"/><circle cx="8.5" cy="8" r="4.3" fill="#bfe2f5" stroke="#222" stroke-width="1.4"/></svg>
<svg style="left:449px;top:679px" width="16" height="16" viewBox="0 0 16 16"><rect x="4.75" y="0.75" width="10.5" height="14.5" rx="1" fill="#eee" stroke="#333" stroke-width="1.5"/><path d="M1.5 3.5L8.5 11.5M8.5 3.5L1.5 11.5" stroke="#300" stroke-width="4"/><path d="M1.5 3.5L8.5 11.5M8.5 3.5L1.5 11.5" stroke="#f01c2c" stroke-width="2.4"/></svg>
<div style="left:4px;top:741px;width:1192px;height:1px;background:#f0f0f0;"></div>
<div style="left:4px;top:759.5px;width:1192px;height:1px;background:#f0f0f0;"></div>
<div style="left:4px;top:778px;width:1192px;height:1px;background:#f0f0f0;"></div>
<div style="left:4px;top:796.5px;width:1192px;height:1px;background:#f0f0f0;"></div>
<div style="left:4px;top:815px;width:1192px;height:1px;background:#f0f0f0;"></div>
<div style="left:4px;top:833.5px;width:1192px;height:1px;background:#f0f0f0;"></div>
<div style="left:42.5px;top:698px;width:1px;height:150px;background:#f0f0f0;"></div>
<div style="left:82px;top:698px;width:1px;height:150px;background:#f0f0f0;"></div>
<div style="left:392px;top:698px;width:1px;height:150px;background:#f0f0f0;"></div>
<div style="left:1178px;top:698px;width:1px;height:150px;background:#f0f0f0;"></div>
<div style="left:42.5px;top:700px;width:1px;height:20px;background:#e5e5e5;"></div>
<div style="left:82px;top:700px;width:1px;height:20px;background:#e5e5e5;"></div>
<div style="left:392px;top:700px;width:1px;height:20px;background:#e5e5e5;"></div>
<div style="left:1178px;top:700px;width:1px;height:20px;background:#e5e5e5;"></div>
<div style="left:10.4px;top:704.80px;font:normal 13px/13px 'Liberation Sans', sans-serif;color:#1e1e1e;-webkit-text-stroke:0.3px #1e1e1e;transform:scaleX(0.8747);transform-origin:0 0;">Line</div>
<div style="left:49px;top:704.80px;font:normal 13px/13px 'Liberation Sans', sans-serif;color:#1e1e1e;-webkit-text-stroke:0.3px #1e1e1e;transform:scaleX(0.8971);transform-origin:0 0;">Col</div>
<div style="left:87.5px;top:704.80px;font:normal 13px/13px 'Liberation Sans', sans-serif;color:#1e1e1e;-webkit-text-stroke:0.3px #1e1e1e;transform:scaleX(0.8354);transform-origin:0 0;">File</div>
<div style="left:398.2px;top:704.80px;font:normal 13px/13px 'Liberation Sans', sans-serif;color:#1e1e1e;-webkit-text-stroke:0.3px #1e1e1e;transform:scaleX(0.8493);transform-origin:0 0;">Message</div>
<div style="left:87.5px;top:727.10px;font:bold 13px/13px 'Liberation Sans', sans-serif;color:#000;-webkit-text-stroke:0.3px #000;transform:scaleX(0.8971);transform-origin:0 0;">C:\Users\zmofun.000\Desktop\hello.c</div>
<div style="left:398.2px;top:727.10px;font:bold 13px/13px 'Liberation Sans', sans-serif;color:#000;-webkit-text-stroke:0.3px #000;transform:scaleX(0.8837);transform-origin:0 0;">In function 'main':</div>
<div style="left:10.4px;top:744.80px;font:normal 13px/13px 'Liberation Sans', sans-serif;color:#f86c22;-webkit-text-stroke:0.3px #f86c22;transform:scaleX(0.7607);transform-origin:0 0;">14</div>
<div style="left:49px;top:744.80px;font:normal 13px/13px 'Liberation Sans', sans-serif;color:#f86c22;-webkit-text-stroke:0.3px #f86c22;">4</div>
<div style="left:87.5px;top:744.80px;font:normal 13px/13px 'Liberation Sans', sans-serif;color:#f86c22;-webkit-text-stroke:0.3px #f86c22;transform:scaleX(0.8970);transform-origin:0 0;">C:\Users\zmofun.000\Desktop\hello.c</div>
<div style="left:398.2px;top:744.80px;font:normal 13px/13px 'Liberation Sans', sans-serif;color:#f86c22;-webkit-text-stroke:0.3px #f86c22;transform:scaleX(0.9162);transform-origin:0 0;">[Warning] assignment from incompatible pointer type</div>
<div style="left:1px;top:849px;width:1198px;height:23px;background:#f0f0f0;"></div>
<div style="left:1px;top:849px;width:1198px;height:1px;background:#dadada;"></div>
<div style="left:2.8px;top:856.90px;font:normal 13px/13px 'Liberation Sans', sans-serif;color:#1e1e1e;-webkit-text-stroke:0.3px #1e1e1e;transform:scaleX(0.9223);transform-origin:0 0;">Line:</div>
<div style="left:41.3px;top:856.90px;font:normal 13px/13px 'Liberation Sans', sans-serif;color:#1e1e1e;-webkit-text-stroke:0.3px #1e1e1e;">9</div>
<div style="left:91px;top:856.90px;font:normal 13px/13px 'Liberation Sans', sans-serif;color:#1e1e1e;-webkit-text-stroke:0.3px #1e1e1e;transform:scaleX(0.8867);transform-origin:0 0;">Col:</div>
<div style="left:126px;top:856.90px;font:normal 13px/13px 'Liberation Sans', sans-serif;color:#1e1e1e;-webkit-text-stroke:0.3px #1e1e1e;">5</div>
<div style="left:175px;top:856.90px;font:normal 13px/13px 'Liberation Sans', sans-serif;color:#1e1e1e;-webkit-text-stroke:0.3px #1e1e1e;transform:scaleX(0.8258);transform-origin:0 0;">Sel:</div>
<div style="left:206.5px;top:856.90px;font:normal 13px/13px 'Liberation Sans', sans-serif;color:#1e1e1e;-webkit-text-stroke:0.3px #1e1e1e;">0</div>
<div style="left:257px;top:856.90px;font:normal 13px/13px 'Liberation Sans', sans-serif;color:#1e1e1e;-webkit-text-stroke:0.3px #1e1e1e;transform:scaleX(0.8504);transform-origin:0 0;">Lines:</div>
<div style="left:297.5px;top:856.90px;font:normal 13px/13px 'Liberation Sans', sans-serif;color:#1e1e1e;-webkit-text-stroke:0.3px #1e1e1e;transform:scaleX(0.7953);transform-origin:0 0;">19</div>
<div style="left:352.5px;top:856.90px;font:normal 13px/13px 'Liberation Sans', sans-serif;color:#1e1e1e;-webkit-text-stroke:0.3px #1e1e1e;transform:scaleX(0.8761);transform-origin:0 0;">Length:</div>
<div style="left:399px;top:856.90px;font:normal 13px/13px 'Liberation Sans', sans-serif;color:#1e1e1e;-webkit-text-stroke:0.3px #1e1e1e;transform:scaleX(0.8298);transform-origin:0 0;">262</div>
<div style="left:470.3px;top:856.90px;font:normal 13px/13px 'Liberation Sans', sans-serif;color:#1e1e1e;-webkit-text-stroke:0.3px #1e1e1e;transform:scaleX(0.8766);transform-origin:0 0;">Insert</div>
<div style="left:548px;top:856.90px;font:normal 13px/13px 'Liberation Sans', sans-serif;color:#1e1e1e;-webkit-text-stroke:0.3px #1e1e1e;transform:scaleX(0.8640);transform-origin:0 0;">Done parsing in 0 seconds</div>
<div style="left:465.5px;top:851px;width:1px;height:21px;background:#d9d9d9;"></div>
<div style="left:542.5px;top:851px;width:1px;height:21px;background:#d9d9d9;"></div>
<svg style="left:1183px;top:858px" width="12" height="12"><rect x="9.0" y="9.0" width="1.2" height="1.2" fill="#aaa"/><rect x="9.0" y="6.5" width="1.2" height="1.2" fill="#aaa"/><rect x="9.0" y="4.0" width="1.2" height="1.2" fill="#aaa"/><rect x="6.5" y="9.0" width="1.2" height="1.2" fill="#aaa"/><rect x="6.5" y="6.5" width="1.2" height="1.2" fill="#aaa"/><rect x="4.0" y="9.0" width="1.2" height="1.2" fill="#aaa"/></svg>
<div style="left:395px;top:122px;width:470px;height:523px;background:#f0f0f0;"></div>
<div style="left:395px;top:122px;width:470px;height:2px;background:#cdcdcd;"></div>
<div style="left:395px;top:122px;width:1px;height:523px;background:#a4a4a4;"></div>
<div style="left:395px;top:644px;width:470px;height:1.2px;background:#a8a8a8;"></div>
<div style="left:864px;top:123px;width:1px;height:25px;background:#a4a4a4;"></div>
<div style="left:864px;top:148px;width:1px;height:496px;background:#e4e4e4;"></div>
<div style="left:396px;top:124px;width:468px;height:24px;background:#fff;"></div>
<div style="left:399px;top:128.90px;font:normal 13px/13px 'Liberation Sans', sans-serif;color:#aaa;-webkit-text-stroke:0.3px #aaa;transform:scaleX(0.9808);transform-origin:0 0;">Compiler Options</div>
<svg style="left:843px;top:130px" width="11" height="11" viewBox="0 0 11 11"><path d="M0.5 0.5L10.5 10.5M10.5 0.5L0.5 10.5" stroke="#999" stroke-width="1"/></svg>
<div style="left:407.5px;top:163px;width:446px;height:42.5px;border:1px solid #dcdcdc;box-sizing:border-box;"></div>
<div style="left:413px;top:158px;width:134px;height:9px;background:#f0f0f0;"></div>
<div style="left:415.5px;top:157.10px;font:normal 13px/13px 'Liberation Sans', sans-serif;color:#1e1e1e;-webkit-text-stroke:0.3px #1e1e1e;transform:scaleX(0.9030);transform-origin:0 0;">Compiler set to configure</div>
<div style="left:414.8px;top:175.4px;width:311.2px;height:21.6px;background:#e1e1e1;border:1px solid #adadad;box-sizing:border-box;"></div>
<div style="left:419.3px;top:180.20px;font:normal 13px/13px 'Liberation Sans', sans-serif;color:#000;-webkit-text-stroke:0.3px #000;transform:scaleX(0.8354);transform-origin:0 0;">TDM-GCC 4.9.2 64-bit Release</div>
<svg style="left:712px;top:183px" width="12" height="8" viewBox="0 0 12 8"><path d="M2 2 L6 6 L10 2" fill="none" stroke="#555" stroke-width="1.3"/></svg>
<div style="left:734px;top:176px;width:19.4px;height:19.5px;background:#e1e1e1;border:1px solid #adadad;box-sizing:border-box;"></div>
<div style="left:757.3px;top:176px;width:19.4px;height:19.5px;background:#e1e1e1;border:1px solid #adadad;box-sizing:border-box;"></div>
<div style="left:780.5px;top:176px;width:19.4px;height:19.5px;background:#e1e1e1;border:1px solid #adadad;box-sizing:border-box;"></div>
<div style="left:803.8px;top:176px;width:19.4px;height:19.5px;background:#e1e1e1;border:1px solid #adadad;box-sizing:border-box;"></div>
<div style="left:827.2px;top:176px;width:19.4px;height:19.5px;background:#e1e1e1;border:1px solid #adadad;box-sizing:border-box;"></div>
<svg style="left:734px;top:176px" width="20" height="20" viewBox="0 0 20 20"><path d="M2.8 7.5H9.2M6 4.3V10.7" stroke="#5a3a00" stroke-width="3.4" stroke-linecap="round"/><path d="M2.8 7.5H9.2M6 4.3V10.7" stroke="#f8c820" stroke-width="1.8" stroke-linecap="round"/><path d="M9.3 10.8H15.7M12.5 7.6000000000000005V14.0" stroke="#5a3a00" stroke-width="3.4" stroke-linecap="round"/><path d="M9.3 10.8H15.7M12.5 7.6000000000000005V14.0" stroke="#f8c820" stroke-width="1.8" stroke-linecap="round"/></svg>
<svg style="left:757.3px;top:176px" width="20" height="20" viewBox="0 0 20 20"><path d="M4.699999999999999 9.7H14.7M9.7 4.699999999999999V14.7" stroke="#103a10" stroke-width="5.4" stroke-linecap="round"/><path d="M4.699999999999999 9.7H14.7M9.7 4.699999999999999V14.7" stroke="#50d040" stroke-width="3.2" stroke-linecap="round"/></svg>
<svg style="left:780.5px;top:176px" width="20" height="20" viewBox="0 0 20 20"><path d="M4.699999999999999 9.7H14.7M9.7 4.699999999999999V14.7" stroke="#103a10" stroke-width="5.4" stroke-linecap="round"/><path d="M4.699999999999999 9.7H14.7M9.7 4.699999999999999V14.7" stroke="#50d040" stroke-width="3.2" stroke-linecap="round"/></svg>
<svg style="left:803.8px;top:176px" width="20" height="20" viewBox="0 0 20 20"><path d="M3 12 Q6 8.5 9 10 Q12 11 15 8.5" fill="none" stroke="#103a10" stroke-width="3.4" stroke-linecap="round"/><path d="M3 12 Q6 8.5 9 10 Q12 11 15 8.5" fill="none" stroke="#70d060" stroke-width="1.8" stroke-linecap="round"/><path d="M12.5 5.5 L17.5 7 L14.5 11.5Z" fill="#70d060" stroke="#103a10" stroke-width="1" stroke-linejoin="round"/></svg>
<svg style="left:827.2px;top:176px" width="20" height="20" viewBox="0 0 20 20"><rect x="4.3" y="8" width="10.5" height="9.5" rx="1.5" fill="#74a868" stroke="#222" stroke-width="1.2"/><path d="M3 9 Q3 4 9.5 4 Q16 4 16 9Z" fill="#74b866" stroke="#222" stroke-width="1.2"/><circle cx="9.5" cy="3" r="1.1" fill="#222"/></svg>
<div style="left:415px;top:199.5px;width:174px;height:2px;background:#e81020;"></div>
<div style="left:449px;top:219.3px;width:52.19999999999999px;height:19px;background:#f0f0f0;border:1px solid #d9d9d9;border-bottom:none;box-sizing:border-box;"></div>
<div style="left:500.2px;top:219.3px;width:66.80000000000001px;height:19px;background:#f0f0f0;border:1px solid #d9d9d9;border-bottom:none;box-sizing:border-box;"></div>
<div style="left:566px;top:219.3px;width:59.799999999999955px;height:19px;background:#f0f0f0;border:1px solid #d9d9d9;border-bottom:none;box-sizing:border-box;"></div>
<div style="left:396px;top:237.5px;width:466.5px;height:369.5px;background:#fff;border:1px solid #d9d9d9;border-left-color:#f4f4f4;box-sizing:border-box;"></div>
<div style="left:397.7px;top:217px;width:51.5px;height:22px;background:#fff;border:1px solid #d9d9d9;border-bottom:none;box-sizing:border-box;"></div>
<div style="left:403.6px;top:219.90px;font:normal 13px/13px 'Liberation Sans', sans-serif;color:#1e1e1e;-webkit-text-stroke:0.3px #1e1e1e;transform:scaleX(0.8216);transform-origin:0 0;">General</div>
<div style="left:454.3px;top:221.90px;font:normal 13px/13px 'Liberation Sans', sans-serif;color:#1e1e1e;-webkit-text-stroke:0.3px #1e1e1e;transform:scaleX(0.8579);transform-origin:0 0;">Settings</div>
<div style="left:506.4px;top:221.90px;font:normal 13px/13px 'Liberation Sans', sans-serif;color:#1e1e1e;-webkit-text-stroke:0.3px #1e1e1e;transform:scaleX(0.8628);transform-origin:0 0;">Directories</div>
<div style="left:572px;top:221.90px;font:normal 13px/13px 'Liberation Sans', sans-serif;color:#1e1e1e;-webkit-text-stroke:0.3px #1e1e1e;transform:scaleX(0.8696);transform-origin:0 0;">Programs</div>
<svg style="left:409px;top:248.5px" width="13" height="13" viewBox="0 0 13 13"><rect x="0.5" y="0.5" width="12" height="12" fill="#fff" stroke="#333" stroke-width="1"/><path d="M2.5 6.5 L5.2 9.3 L10.5 3.2" fill="none" stroke="#333" stroke-width="1.3"/></svg>
<div style="left:424.5px;top:249.20px;font:normal 13px/13px 'Liberation Sans', sans-serif;color:#1e1e1e;-webkit-text-stroke:0.3px #1e1e1e;transform:scaleX(0.9127);transform-origin:0 0;">Add the following commands when calling the compiler:</div>
<svg style="left:409px;top:423.3px" width="13" height="13" viewBox="0 0 13 13"><rect x="0.5" y="0.5" width="12" height="12" fill="#fff" stroke="#333" stroke-width="1"/><path d="M2.5 6.5 L5.2 9.3 L10.5 3.2" fill="none" stroke="#333" stroke-width="1.3"/></svg>
<div style="left:424.5px;top:423.90px;font:normal 13px/13px 'Liberation Sans', sans-serif;color:#1e1e1e;-webkit-text-stroke:0.3px #1e1e1e;transform:scaleX(0.9093);transform-origin:0 0;">Add the following commands when calling the linker:</div>
<div style="left:421px;top:272px;width:429.5px;height:145px;background:#fff;border:1px solid #8c8c8c;box-sizing:border-box;"></div>
<div style="left:833px;top:274.5px;width:15px;height:140px;background:#f0f0f0;"></div>
<svg style="left:835.5px;top:279.5px" width="10" height="7" viewBox="0 0 10 7"><path d="M1.5 5.5 L5 2 L8.5 5.5" fill="none" stroke="#ababab" stroke-width="1.3"/></svg>
<svg style="left:835.5px;top:403px" width="10" height="7" viewBox="0 0 10 7"><path d="M1.5 1.5 L5 5 L8.5 1.5" fill="none" stroke="#ababab" stroke-width="1.3"/></svg>
<div style="left:421px;top:447px;width:429.5px;height:144.5px;background:#fff;border:1px solid #8c8c8c;box-sizing:border-box;"></div>
<div style="left:833px;top:449.5px;width:15px;height:139.5px;background:#f0f0f0;"></div>
<svg style="left:835.5px;top:454.5px" width="10" height="7" viewBox="0 0 10 7"><path d="M1.5 5.5 L5 2 L8.5 5.5" fill="none" stroke="#ababab" stroke-width="1.3"/></svg>
<svg style="left:835.5px;top:577.5px" width="10" height="7" viewBox="0 0 10 7"><path d="M1.5 1.5 L5 5 L8.5 1.5" fill="none" stroke="#ababab" stroke-width="1.3"/></svg>
<div style="left:426.8px;top:276.90px;font:normal 13px/13px 'Liberation Sans', sans-serif;color:#1e1e1e;-webkit-text-stroke:0.3px #1e1e1e;transform:scaleX(0.8809);transform-origin:0 0;">-save-temps</div>
<div style="left:427px;top:451.20px;font:normal 13px/13px 'Liberation Sans', sans-serif;color:#1e1e1e;-webkit-text-stroke:0.3px #1e1e1e;transform:scaleX(0.9344);transform-origin:0 0;">-static-libgcc</div>
<div style="left:600.5px;top:615px;width:80px;height:21.3px;background:#e1e1e1;border:2px solid #0078d7;box-sizing:border-box;"></div>
<div style="left:687.5px;top:615px;width:80.3px;height:21.3px;background:#e1e1e1;border:1px solid #adadad;box-sizing:border-box;"></div>
<div style="left:775px;top:615px;width:80px;height:21.3px;background:#cccccc;border:1px solid #bfbfbf;box-sizing:border-box;"></div>
<svg style="left:622px;top:618px" width="18" height="16" viewBox="0 0 18 16"><path d="M2 8.5 L6.5 13 L16 2.5" fill="none" stroke="#0a3a0a" stroke-width="3.4" stroke-linejoin="round"/><path d="M2 8.5 L6.5 13 L16 2.5" fill="none" stroke="#20a020" stroke-width="1.8" stroke-linejoin="round"/></svg>
<div style="left:644px;top:619.90px;font:normal 13px/13px 'Liberation Sans', sans-serif;color:#1e1e1e;-webkit-text-stroke:0.3px #1e1e1e;text-decoration:underline;transform:scaleX(0.88);transform-origin:0 0;">O</div>
<div style="left:651px;top:619.90px;font:normal 13px/13px 'Liberation Sans', sans-serif;color:#1e1e1e;-webkit-text-stroke:0.3px #1e1e1e;transform:scaleX(0.88);transform-origin:0 0;">K</div>
<svg style="left:702px;top:619px" width="15" height="14" viewBox="0 0 15 14"><path d="M2 2L13 12M13 2L2 12" stroke="#600" stroke-width="4"/><path d="M2 2L13 12M13 2L2 12" stroke="#d01010" stroke-width="2.6"/></svg>
<div style="left:721.4px;top:619.90px;font:normal 13px/13px 'Liberation Sans', sans-serif;color:#1e1e1e;-webkit-text-stroke:0.3px #1e1e1e;text-decoration:underline;">C</div>
<div style="left:729.5px;top:619.90px;font:normal 13px/13px 'Liberation Sans', sans-serif;color:#1e1e1e;-webkit-text-stroke:0.3px #1e1e1e;transform:scaleX(0.8687);transform-origin:0 0;">ancel</div>
<svg style="left:793px;top:616px" width="16" height="19" viewBox="0 0 16 19"><path d="M3.5 6 Q3.5 1.5 8 1.5 Q12.5 1.5 12.5 5.5 Q12.5 8.5 9.5 9.5 L9.5 12.5" fill="none" stroke="#a8a8a8" stroke-width="3.2" stroke-linecap="round"/><path d="M3.5 6 Q3.5 1.5 8 1.5 Q12.5 1.5 12.5 5.5 Q12.5 8.5 9.5 9.5 L9.5 12.5" fill="none" stroke="#e4e4e4" stroke-width="1.4" stroke-linecap="round"/><circle cx="9.5" cy="16" r="1.8" fill="#e4e4e4" stroke="#a8a8a8" stroke-width="1"/></svg>
<div style="left:813.2px;top:619.90px;font:normal 13px/13px 'Liberation Sans', sans-serif;color:#a0a0a0;-webkit-text-stroke:0.3px #a0a0a0;text-decoration:underline;">H</div>
<div style="left:821.8px;top:619.90px;font:normal 13px/13px 'Liberation Sans', sans-serif;color:#a0a0a0;-webkit-text-stroke:0.3px #a0a0a0;transform:scaleX(0.9799);transform-origin:0 0;">elp</div>
<div style="left:667px;top:73px;width:212px;height:2.5px;background:#e81020;"></div>
<div style="left:401px;top:235.5px;width:339.5px;height:76.5px;border:2px solid #f01020;box-sizing:border-box;"></div>
<svg style="left:0;top:0" width="1200" height="873"><line x1="696.2" y1="81.5" x2="582" y2="186" stroke="#e81020" stroke-width="3.6" stroke-linecap="round"/><path d="M577.3 190.2 L582.4 177.8 L591 187Z" fill="#e81020"/></svg>
</body></html>
